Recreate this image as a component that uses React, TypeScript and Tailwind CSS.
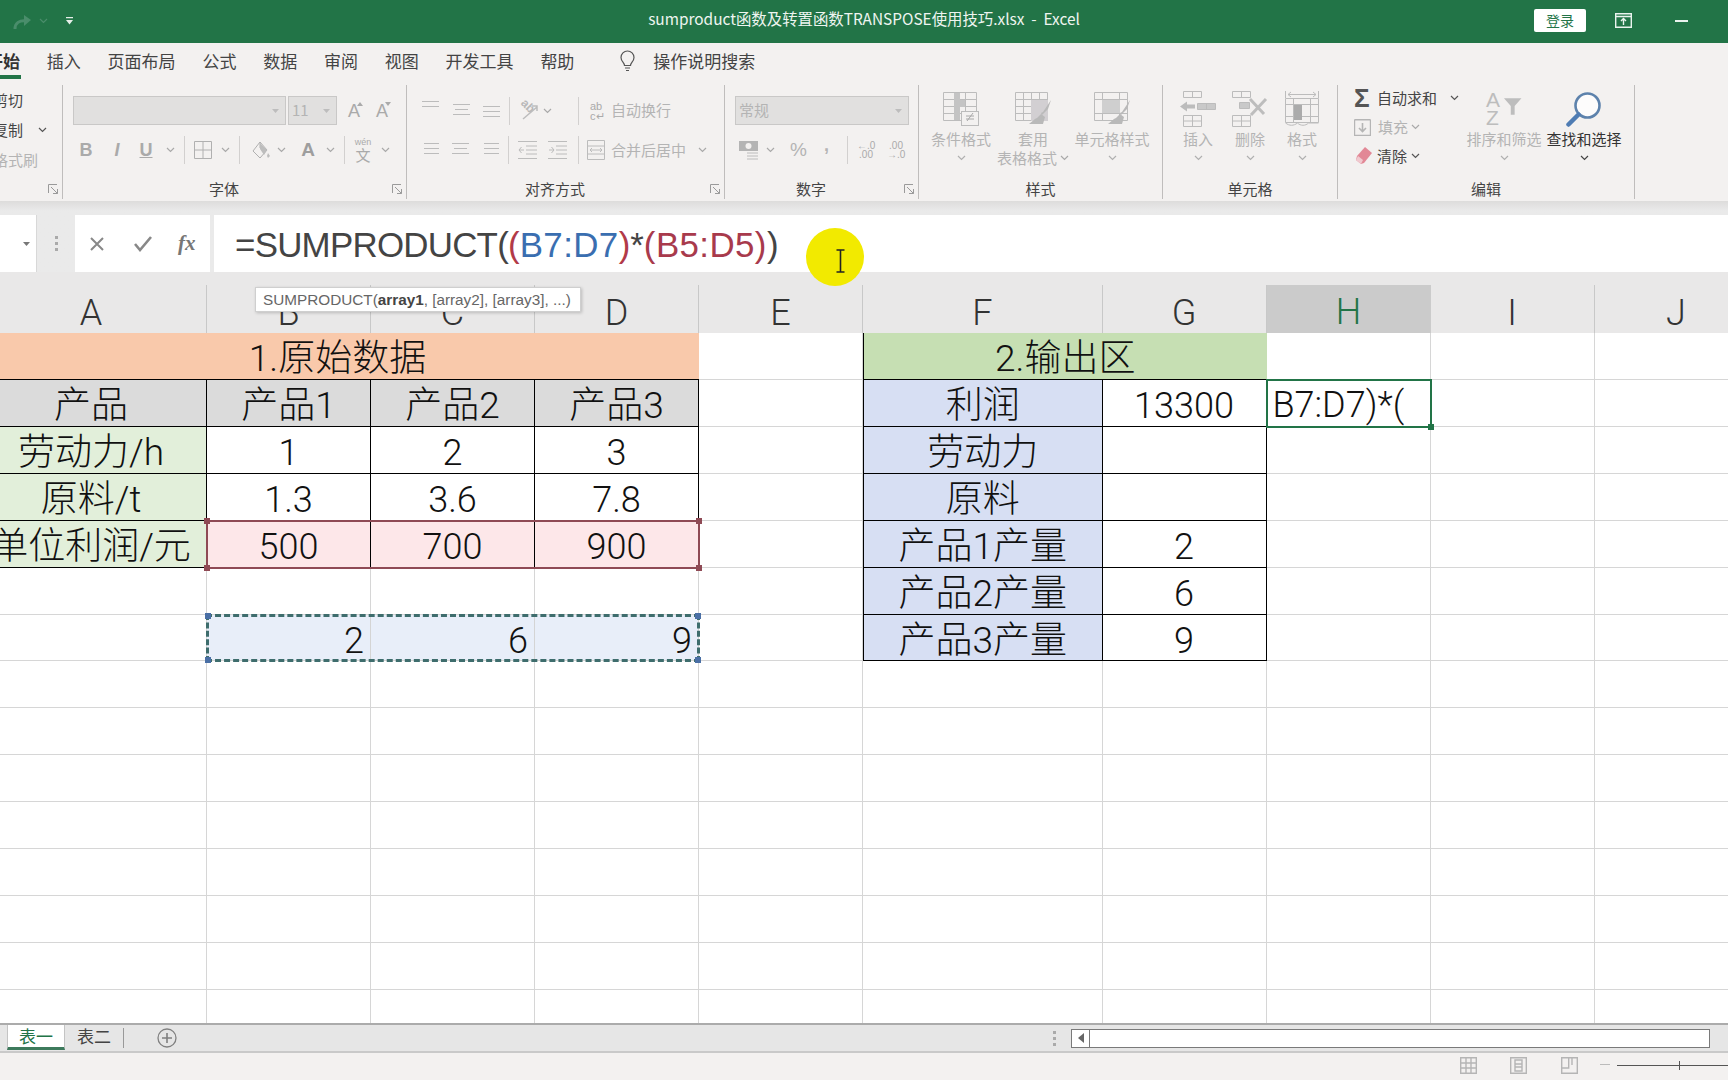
import React from "react";

const G = "#bcbcbc";

function Chev({ c = "#a9a9a9", className = "" }: { c?: string; className?: string }) {
  return (
    <svg viewBox="0 0 9 6" className={"w-[9px] h-[6px] shrink-0 " + className} fill="none" stroke={c} strokeWidth="1.2">
      <path d="M1 1l3.5 3.5L8 1" />
    </svg>
  );
}
function Sep({ className = "" }: { className?: string }) {
  return <div className={"w-px h-[28px] bg-[#d2d0cf] shrink-0 " + className} />;
}
function Launcher() {
  return (
    <svg viewBox="0 0 11 11" className="w-[11px] h-[11px]" fill="none" stroke="#9a9a9a" strokeWidth="1">
      <path d="M.5 9V.5H9M3 3l6.5 6.5M5 9.5h4.5V5" />
    </svg>
  );
}
function Lines({ w = [19, 14, 19], y = 0 }: { w?: number[]; y?: number }) {
  return (
    <svg viewBox="0 0 19 16" className="w-[19px] h-[16px] shrink-0" stroke={G} strokeWidth="1">
      {w.map((x, i) => (
        <path key={i} d={`M${(19 - x) / 2} ${y + 1.5 + i * 5}h${x}`} />
      ))}
    </svg>
  );
}
function Combo({ className, text }: { className: string; text: string }) {
  return (
    <div className={"h-[29px] bg-[#e1e0df] border border-[#c9c8c7] flex items-center justify-between pl-[3px] pr-[6px] text-[15px] text-[#b4b4b4] shrink-0 " + className}>
      <span>{text}</span>
      <svg viewBox="0 0 7 4" className="w-[7px] h-[4px]" fill="#bdbdbd"><path d="M0 0h7L3.5 4z" /></svg>
    </div>
  );
}
function GrowA({ down }: { down?: boolean }) {
  return (
    <div className="flex items-start w-[17px] shrink-0">
      <span className="text-[18px] leading-[24px] text-[#aaa] [font-family:'Liberation_Sans',sans-serif]">A</span>
      <svg viewBox="0 0 6 4" className="w-[6px] h-[4px] mt-[3px] -ml-[3px]" fill="#aaa"><path d={down ? "M0 0h6L3 4z" : "M0 4h6L3 0z"} /></svg>
    </div>
  );
}
function BigBtn({ className, icon, a, b, dark }: { className: string; icon: React.ReactNode; a: string; b?: string; dark?: boolean }) {
  return (
    <div className={"flex flex-col items-center pt-[5px] shrink-0 " + className}>
      <div className="h-[38px] flex items-center justify-center">{icon}</div>
      <div className={"h-[20px] mt-[1px] text-[15px] leading-[20px] whitespace-nowrap " + (dark ? "text-[#333]" : "text-[#b4b4b4]")}>{a}</div>
      {b ? (
        <div className="h-[18px] text-[15px] leading-[18px] whitespace-nowrap text-[#b4b4b4] flex items-center gap-[3px]">{b}<Chev /></div>
      ) : (
        <div className="h-[18px] flex items-center"><Chev c={dark ? "#444" : "#b0b0b0"} /></div>
      )}
    </div>
  );
}
function Section({ className, label, launcher, children }: { className: string; label: string; launcher?: boolean; children: React.ReactNode }) {
  return (
    <div className={"flex flex-col h-full border-r border-[#bfbdbc] shrink-0 " + className}>
      <div className="flex-1 min-h-0">{children}</div>
      <div className="h-[20px] grid grid-cols-[1fr_auto_1fr] items-center text-[15px] leading-[20px] text-[#444]">
        <span />
        <span className={launcher ? "pr-[21px]" : ""}>{label}</span>
        <span className="flex justify-end pr-[3px]">{launcher ? <Launcher /> : null}</span>
      </div>
    </div>
  );
}

const IconCond = (
  <svg viewBox="0 0 36 34" className="w-[36px] h-[34px]" fill="none" stroke={G} strokeWidth="1">
    <path d="M.5.5h33v28H.5zM11.5.5v28M22.5.5v28M.5 7.5h33M.5 14.5h33M.5 21.5h33" />
    <path fill="#c4c4c4" stroke="none" d="M11 1h6v27h-6zM17 8h5v7h-5z" />
    <rect x="18.5" y="19.5" width="17" height="14" fill="#f3f1f0" />
    <path d="M24 29l6-8M23 24h8M23 27h8" stroke="#a8a8a8" />
  </svg>
);
const Brush = <path fill="#b9b9b9" stroke="none" d="M36 8l-8 12-2 1 1 2 6-6zM26 22l-4 4c-3 1-5 4-8 6h14l2-7z" />;
const IconTable = (
  <svg viewBox="0 0 36 34" className="w-[36px] h-[34px]" fill="none" stroke={G} strokeWidth="1">
    <path d="M.5.5h32v28H.5zM8.5.5v28M16.5.5v28M24.5.5v28M.5 7.5h32M.5 14.5h32M.5 21.5h32" />
    <path fill="#d2cfd2" stroke="none" d="M16 8h17v21H16z" />
    {Brush}
  </svg>
);
const IconCell = (
  <svg viewBox="0 0 36 34" className="w-[36px] h-[34px]" fill="none" stroke={G} strokeWidth="1">
    <path d="M.5.5h33v28H.5zM8.5.5v28M25.5.5v28M.5 7.5h33M.5 21.5h33" />
    <path fill="#cfcfcf" stroke="none" d="M8 8h18v13H8z" />
    {Brush}
  </svg>
);
const IconInsert = (
  <svg viewBox="0 0 36 36" className="w-[36px] h-[36px]" fill="none" stroke={G} strokeWidth="1">
    <path d="M3.5.5h18v6h-18zM12.5.5v6M3.5 24.5h18v11h-18zM12.5 24.5v11M3.5 30h18" />
    <path fill="#c9c9c9" d="M17.5 12.5h18v6h-18z" />
    <path d="M26.5 12.5v6" />
    <path fill={G} stroke="none" d="M0 15.5l7-5v3h8v4H7v3z" />
  </svg>
);
const IconDelete = (
  <svg viewBox="0 0 36 36" className="w-[36px] h-[36px]" fill="none" stroke={G} strokeWidth="1">
    <path d="M.5.5h18v6H.5zM9.5.5v6M.5 24.5h18v11H.5zM9.5 24.5v11M.5 30h18" />
    <path fill="#c9c9c9" d="M7.5 11.5h10v6h-10z" />
    <path stroke="#bdbdbd" strokeWidth="3" d="M18 8l14 15M34 8L19 24" />
  </svg>
);
const IconFormat = (
  <svg viewBox="0 0 34 36" className="w-[34px] h-[36px]" fill="none" stroke={G} strokeWidth="1">
    <path d="M.5 0v7M33.5 0v7M3 3.5h28M3 3.5l3-2.5M3 3.5l3 2.5M31 3.5l-3-2.5M31 3.5l-3 2.5" />
    <path d="M.5 7.5h33v24H.5zM8.5 7.5v24M25.5 7.5v24M.5 13.5h33M.5 25.5h33" />
    <path fill="#ababab" stroke="none" d="M9 14h8v15H9z" />
    <path d="M.5 32c4 3 8 3 12 0 3 3 8 3 11 0h10" />
  </svg>
);
const IconSortF = (
  <div className="flex items-start gap-0 w-[36px] h-[36px]">
    <div className="flex flex-col w-[15px] text-[21px] leading-[18px] font-normal text-[#bdbdbd] [font-family:'Liberation_Sans',sans-serif]"><span>A</span><span>Z</span></div>
    <svg viewBox="0 0 20 20" className="w-[20px] h-[20px] mt-[6px] ml-[2px]" fill="#bdbdbd"><path d="M1 1h18l-7 8v9H8V9z" /></svg>
  </div>
);
const IconFind = (
  <svg viewBox="0 0 36 36" className="w-[36px] h-[36px]" fill="none">
    <circle cx="21.5" cy="14.5" r="12" fill="#fdfcfc" stroke="#5d82ac" strokeWidth="2.6" />
    <path d="M12.5 23.5L2.5 33.5" stroke="#4f7cb3" strokeWidth="4.5" strokeLinecap="round" />
  </svg>
);

function TitleBar() {
  return (
    <div className="h-[43px] bg-[#227447] grid grid-cols-[1fr_auto_1fr] items-center shrink-0">
      <div className="flex items-center pl-[12px]">
        <svg viewBox="0 0 20 16" className="w-[20px] h-[16px]" fill="none" stroke="#4a8d6b" strokeWidth="3">
          <path d="M3 15c0-6 4-9 12-8" /><path fill="#4a8d6b" stroke="none" d="M12 1l7 5-7 6z" />
        </svg>
        <Chev c="#4a8d6b" className="ml-[7px] mb-[2px]" />
        <svg viewBox="0 0 7 9" className="w-[7px] h-[9px] ml-[18px]" fill="#e6efe9"><path d="M0 0h7v1.2H0zM0 3h7L3.5 7.5z" /></svg>
      </div>
      <div className="text-[15.4px] text-[#eef5f0] whitespace-pre -mt-[6px]">sumproduct函数及转置函数TRANSPOSE使用技巧.xlsx  -  Excel</div>
      <div className="flex items-center justify-end -mt-[2px]">
        <div className="w-[52px] h-[23px] bg-white rounded-[2px] text-[#227447] text-[14px] leading-[23px] text-center">登录</div>
        <svg viewBox="0 0 17 15" className="w-[17px] h-[15px] ml-[29px]" fill="none" stroke="#eaf3ee" strokeWidth="1.4">
          <path d="M.7.7h15.6v13.6H.7zM.7 3.5h15.6" /><path d="M8.5 12V6M6 8l2.5-2.5L11 8" />
        </svg>
        <div className="w-[13px] h-[2px] bg-[#eaf3ee] ml-[43px] mr-[40px]" />
      </div>
    </div>
  );
}

function Tabs() {
  const t = ["插入", "页面布局", "公式", "数据", "审阅", "视图", "开发工具", "帮助"];
  return (
    <div className="h-[37px] bg-[#f3f1f0] flex items-start pt-[7px] gap-[26.8px] text-[17px] leading-[22px] text-[#444] shrink-0">
      <div className="-ml-[14px] w-[34px] flex flex-col">
        <span className="font-bold text-[#333] whitespace-nowrap">开始</span>
        <div className="ml-[14px] w-[21px] h-[4px] mt-[3px] bg-[#227447]" />
      </div>
      {t.map((x) => (
        <span key={x} className="whitespace-nowrap">{x}</span>
      ))}
      <div className="flex items-center gap-[17px] ml-[18px]">
        <svg viewBox="0 0 17 22" className="w-[17px] h-[22px]" fill="none" stroke="#555" strokeWidth="1.2">
          <path d="M5.5 15.5c0-3-3.5-4-3.5-8a6.5 6.5 0 0113 0c0 4-3.5 5-3.5 8zM6 18h5M7 20.5h3" />
        </svg>
        <span className="whitespace-nowrap">操作说明搜索</span>
      </div>
    </div>
  );
}

function Ribbon() {
  return (
    <div className="h-[121px] bg-[#f3f1f0] flex pt-[5px] pb-[2px] shrink-0">
      <Section className="w-[63px]" label="" launcher>
        <div className="text-[15px] leading-[30px] text-[#444] -ml-[7px] whitespace-nowrap">
          <div>剪切</div>
          <div className="flex items-center gap-[15px]">复制<Chev c="#555" /></div>
          <div className="text-[#b4b4b4]">格式刷</div>
        </div>
      </Section>

      <Section className="w-[344px]" label="字体" launcher>
        <div className="flex items-center pt-[11px] pl-[10px] h-[40px]">
          <Combo className="w-[213px]" text="" />
          <Combo className="w-[49px] ml-[2px]" text="11" />
          <div className="ml-[11px]"><GrowA /></div>
          <div className="ml-[11px]"><GrowA down /></div>
        </div>
        <div className="flex items-center h-[30px] mt-[10px] text-[#aaa] [font-family:'Liberation_Sans',sans-serif]">
          <span className="w-[18px] ml-[14px] text-center text-[18px] font-bold">B</span>
          <span className="w-[18px] ml-[13px] text-center text-[18px] italic font-bold">I</span>
          <span className="w-[18px] ml-[11px] text-center text-[18px] font-bold underline">U</span>
          <Chev className="ml-[11px]" />
          <Sep className="ml-[9px]" />
          <svg viewBox="0 0 18 18" className="w-[18px] h-[18px] ml-[9px]" fill="none" stroke="#b0b0b0"><path d="M.5.5h17v17H.5zM9 .5v17M.5 9h17" /></svg>
          <Chev className="ml-[9px]" />
          <Sep className="ml-[9px]" />
          <svg viewBox="0 0 18 20" className="w-[18px] h-[20px] ml-[12px]" fill="none" stroke="#b0b0b0"><path d="M8 2L1 11l7 7 7-8zM8 2v6" /><path fill="#bdbdbd" stroke="none" d="M8 3l7 7-3 5-4-6zM16 13l2 3-2 2-1-2z" /></svg>
          <Chev className="ml-[7px]" />
          <span className="w-[16px] ml-[14px] text-center text-[19px] font-bold text-[#9e9e9e]">A</span>
          <Chev className="ml-[10px]" />
          <Sep className="ml-[9px]" />
          <div className="w-[18px] ml-[9px] flex flex-col items-center text-[#aaa] leading-none">
            <span className="text-[9px] leading-[9px] whitespace-nowrap">wén</span>
            <span className="text-[15px] leading-[15px] [font-family:'Noto_Sans_CJK_SC',sans-serif]">文</span>
          </div>
          <Chev className="ml-[9px]" />
        </div>
      </Section>

      <Section className="w-[318px]" label="对齐方式" launcher>
        <div className="flex items-center pt-[11px] h-[40px]">
          <div className="ml-[14px] -mt-[6px]"><Lines w={[17, 17]} /></div>
          <div className="ml-[12px]"><Lines w={[17, 13, 17]} /></div>
          <div className="ml-[11px] mt-[4px]"><Lines w={[17, 17, 17]} /></div>
          <Sep className="ml-[8px]" />
          <div className="ml-[10px] w-[18px] h-[18px] relative shrink-0">
            <span className="absolute left-[1px] -top-[3px] text-[12px] leading-[14px] font-bold text-[#b8b8b8] rotate-45 [font-family:'Liberation_Sans',sans-serif]">ab</span>
            <svg viewBox="0 0 18 18" className="absolute inset-0 w-[18px] h-[18px]" fill="none" stroke={G} strokeWidth="1.5"><path d="M3 17L17 5M12 4h5v5" /></svg>
          </div>
          <Chev className="ml-[5px]" />
          <Sep className="ml-[26px]" />
          <div className="ml-[11px] w-[13px] flex flex-col text-[11px] leading-[10px] text-[#aaa] [font-family:'Liberation_Sans',sans-serif]"><span>ab</span><span>c↵</span></div>
          <span className="ml-[8px] text-[15px] text-[#b4b4b4] whitespace-nowrap">自动换行</span>
        </div>
        <div className="flex items-center h-[30px] mt-[10px]">
          <div className="ml-[15px]"><Lines w={[15, 15, 15]} /></div>
          <div className="ml-[10px]"><Lines w={[17, 13, 17]} /></div>
          <div className="ml-[12px]"><Lines w={[15, 15, 15]} /></div>
          <Sep className="ml-[7px]" />
          <svg viewBox="0 0 19 18" className="w-[19px] h-[18px] ml-[9px]" fill="none" stroke={G}><path d="M0 .5h19M8 5h11M8 9h11M8 13h11M0 17.5h19M6 9H1M3.5 6L1 9l2.5 3" /></svg>
          <svg viewBox="0 0 19 18" className="w-[19px] h-[18px] ml-[11px]" fill="none" stroke={G}><path d="M0 .5h19M8 5h11M8 9h11M8 13h11M0 17.5h19M1 9h5M3.5 6L6 9l-2.5 3" /></svg>
          <Sep className="ml-[11px]" />
          <svg viewBox="0 0 18 20" className="w-[18px] h-[20px] ml-[8px]" fill="none" stroke={G}><path d="M.5.5h17v19H.5zM.5 6h17M.5 14h17M3 10h12M3 10l2-2M3 10l2 2M15 10l-2-2M15 10l-2 2" /></svg>
          <span className="ml-[6px] text-[15px] text-[#b4b4b4] whitespace-nowrap">合并后居中</span>
          <Chev className="ml-[12px]" />
        </div>
      </Section>

      <Section className="w-[194px]" label="数字" launcher>
        <div className="flex items-center pt-[11px] pl-[10px] h-[40px]">
          <Combo className="w-[174px]" text="常规" />
        </div>
        <div className="flex items-center h-[30px] mt-[10px]">
          <svg viewBox="0 0 19 20" className="w-[19px] h-[20px] ml-[14px]" fill="none"><path fill="#b4b4b4" d="M0 1h19v10H0z" /><circle cx="9.5" cy="6" r="3" fill="#f3f1f0" /><path stroke={G} d="M8 13h11M8 16h11M8 19h11" /></svg>
          <Chev className="ml-[8px]" />
          <span className="ml-[15px] w-[18px] text-[19px] text-[#b4b4b4] [font-family:'Liberation_Sans',sans-serif]">%</span>
          <span className="ml-[16px] w-[6px] -mt-[10px] text-[18px] font-bold text-[#b4b4b4] [font-family:'Liberation_Sans',sans-serif]">,</span>
          <Sep className="ml-[17px]" />
          <div className="ml-[9px] w-[16px] text-[10px] leading-[9px] text-right text-[#aaa] [font-family:'Liberation_Sans',sans-serif]"><div>←.0</div><div>.00</div></div>
          <div className="ml-[14px] w-[16px] text-[10px] leading-[9px] text-right text-[#aaa] [font-family:'Liberation_Sans',sans-serif]"><div>.00</div><div>→.0</div></div>
        </div>
      </Section>

      <Section className="w-[244px]" label="样式">
        <div className="flex">
          <BigBtn className="w-[84px]" icon={IconCond} a="条件格式" />
          <BigBtn className="w-[60px]" icon={IconTable} a="套用" b="表格格式" />
          <BigBtn className="w-[98px]" icon={IconCell} a="单元格样式" />
        </div>
      </Section>

      <Section className="w-[175px]" label="单元格">
        <div className="flex">
          <BigBtn className="w-[70px]" icon={IconInsert} a="插入" />
          <BigBtn className="w-[34px]" icon={IconDelete} a="删除" />
          <BigBtn className="w-[70px]" icon={IconFormat} a="格式" />
        </div>
      </Section>

      <Section className="w-[297px]" label="编辑">
        <div className="flex">
          <div className="w-[130px] pl-[16px] -mt-[2px] text-[15px] leading-[20px]">
            <div className="h-[30px] flex items-center text-[#444]">
              <span className="w-[16px] text-[26px] leading-[20px] font-bold text-[#555] [font-family:'Liberation_Sans',sans-serif]">Σ</span>
              <span className="ml-[7px]">自动求和</span>
              <Chev c="#555" className="ml-[13px]" />
            </div>
            <div className="h-[28px] flex items-center text-[#b4b4b4]">
              <svg viewBox="0 0 17 18" className="w-[17px] h-[18px] shrink-0" fill="none" stroke="#b5b5b5" strokeWidth="1.2"><path d="M.6 2h15.8v15.4H.6zM.6 1.5h15.8" /><path d="M8.5 5v8M5 10l3.5 3.5L12 10" strokeWidth="1.6" /></svg>
              <span className="ml-[7px]">填充</span>
              <Chev className="ml-[3px]" />
            </div>
            <div className="h-[30px] flex items-center text-[#444]">
              <svg viewBox="0 0 18 18" className="w-[18px] h-[18px] shrink-0"><path fill="#e28896" d="M11 0l7 6-8 10-3 1-5-4 1-4z" /><path fill="#f0c9cf" d="M4 9l5 4-2 4-5-4z" /></svg>
              <span className="ml-[5px]">清除</span>
              <Chev c="#555" className="ml-[4px]" />
            </div>
          </div>
          <BigBtn className="w-[72px]" icon={IconSortF} a="排序和筛选" />
          <BigBtn className="w-[88px]" icon={IconFind} a="查找和选择" dark />
        </div>
      </Section>
    </div>
  );
}

function FormulaBar() {
  return (
    <div className="h-[71px] flex items-stretch shrink-0 bg-gradient-to-b from-[#dddcdb] from-0% to-[#eaeaea] to-[14%]">
      <div className="flex items-stretch w-full pt-[14px]">
        <div className="w-[37px] bg-white border-r border-[#d8d8d8] flex items-center justify-end pr-[6px]">
          <svg viewBox="0 0 7 4" className="w-[7px] h-[4px]" fill="#777"><path d="M0 0h7L3.5 4z" /></svg>
        </div>
        <div className="w-[38px] flex items-center justify-center">
          <div className="flex flex-col gap-[3px]">
            <div className="w-[3px] h-[3px] bg-[#aaa]" /><div className="w-[3px] h-[3px] bg-[#aaa]" /><div className="w-[3px] h-[3px] bg-[#aaa]" />
          </div>
        </div>
        <div className="w-[135px] bg-white flex items-center pl-[14px] shrink-0">
          <svg viewBox="0 0 16 16" className="w-[16px] h-[16px]" fill="none" stroke="#888" strokeWidth="2"><path d="M2 2l12 12M14 2L2 14" /></svg>
          <svg viewBox="0 0 18 16" className="w-[18px] h-[16px] ml-[29px]" fill="none" stroke="#888" strokeWidth="2.6"><path d="M1 8l5 6L17 1" /></svg>
          <span className="ml-[26px] text-[21px] italic font-bold text-[#777] [font-family:'Liberation_Serif',serif]">fx</span>
        </div>
        <div className="w-[4px] shrink-0" />
        <div className="flex-1 bg-white flex items-center pl-[21px] pt-[3px] text-[34.9px] leading-none text-[#444] [font-family:'Liberation_Sans',sans-serif] whitespace-pre">
          <span className="tracking-[-0.75px]">=SUMPRODUCT(</span>
          <span className="text-[#b23a48]">(</span>
          <span className="text-[#3a6eb0] tracking-[0.4px]">B7:D7</span>
          <span className="text-[#b23a48]">)</span>
          <span>*</span>
          <span className="text-[#a83a4c] tracking-[0.4px]">(B5:D5)</span>
          <span>)</span>
        </div>
      </div>
    </div>
  );
}

const COLS = "grid-cols-[231px_164px_164px_164px_164px_239.5px_164px_164px_164px_164px]";

function Headers() {
  const l = ["A", "B", "C", "D", "E", "F", "G", "H", "I", "J"];
  return (
    <div className="h-[48px] bg-[#e9e8e8] shrink-0">
      <div className={"grid -ml-[24px] h-[48px] " + COLS}>
        {l.map((x) =>
          x === "H" ? (
            <div key={x} className="bg-[#cbcbcb] text-[#227447] border-b-[3px] border-[#227447] flex items-center justify-center text-[36px] font-light">H</div>
          ) : (
            <div key={x} className="border-r border-b-2 border-r-[#c8c8c8] border-b-[#aaaaaa] flex items-center justify-center text-[36px] font-light text-[#333]">{x}</div>
          )
        )}
      </div>
    </div>
  );
}

const B = "border-r border-b border-black";
const C37 = "text-[37px]";
const CJK = "bg-[#e2efda]";
const BL = "bg-[#d7dff3]";
const CELLS: { pos: string; t: string; cls: string }[] = [
  { pos: "col-start-1 col-span-4 row-start-1", t: "1.原始数据", cls: "justify-center bg-[#f9c9ab] border-b border-black " + C37 },
  { pos: "col-start-6 col-span-2 row-start-1", t: "2.输出区", cls: "justify-center bg-[#c6dfb3] border-l border-b border-black " + C37 },
  { pos: "col-start-1 row-start-2", t: "产品", cls: "justify-center bg-[#dbdbdb] " + B + " " + C37 },
  { pos: "col-start-2 row-start-2", t: "产品1", cls: "justify-center bg-[#dbdbdb] " + B + " " + C37 },
  { pos: "col-start-3 row-start-2", t: "产品2", cls: "justify-center bg-[#dbdbdb] " + B + " " + C37 },
  { pos: "col-start-4 row-start-2", t: "产品3", cls: "justify-center bg-[#dbdbdb] " + B + " " + C37 },
  { pos: "col-start-1 row-start-3", t: "劳动力/h", cls: "justify-center " + CJK + " " + B + " " + C37 },
  { pos: "col-start-2 row-start-3", t: "1", cls: "justify-center " + B },
  { pos: "col-start-3 row-start-3", t: "2", cls: "justify-center " + B },
  { pos: "col-start-4 row-start-3", t: "3", cls: "justify-center " + B },
  { pos: "col-start-1 row-start-4", t: "原料/t", cls: "justify-center " + CJK + " " + B + " " + C37 },
  { pos: "col-start-2 row-start-4", t: "1.3", cls: "justify-center " + B },
  { pos: "col-start-3 row-start-4", t: "3.6", cls: "justify-center " + B },
  { pos: "col-start-4 row-start-4", t: "7.8", cls: "justify-center " + B },
  { pos: "col-start-1 row-start-5", t: "单位利润/元", cls: "justify-center " + CJK + " " + B + " whitespace-nowrap overflow-hidden " + C37 },
  { pos: "col-start-2 row-start-5", t: "500", cls: "justify-center bg-[#fde7e9] " + B },
  { pos: "col-start-3 row-start-5", t: "700", cls: "justify-center bg-[#fde7e9] " + B },
  { pos: "col-start-4 row-start-5", t: "900", cls: "justify-center bg-[#fde7e9] " + B },
  { pos: "col-start-2 row-start-7", t: "2", cls: "bg-[#e8eef9] justify-end pr-[6px] border-r border-b border-[#d4d4d4]" },
  { pos: "col-start-3 row-start-7", t: "6", cls: "bg-[#e8eef9] justify-end pr-[6px] border-r border-b border-[#d4d4d4]" },
  { pos: "col-start-4 row-start-7", t: "9", cls: "bg-[#e8eef9] justify-end pr-[6px] border-r border-b border-[#d4d4d4]" },
  { pos: "col-start-6 row-start-2", t: "利润", cls: "justify-center " + BL + " border-l " + B + " " + C37 },
  { pos: "col-start-6 row-start-3", t: "劳动力", cls: "justify-center " + BL + " border-l " + B + " " + C37 },
  { pos: "col-start-6 row-start-4", t: "原料", cls: "justify-center " + BL + " border-l " + B + " " + C37 },
  { pos: "col-start-6 row-start-5", t: "产品1产量", cls: "justify-center " + BL + " border-l " + B + " " + C37 },
  { pos: "col-start-6 row-start-6", t: "产品2产量", cls: "justify-center " + BL + " border-l " + B + " " + C37 },
  { pos: "col-start-6 row-start-7", t: "产品3产量", cls: "justify-center " + BL + " border-l " + B + " " + C37 },
  { pos: "col-start-7 row-start-2", t: "13300", cls: "justify-center " + B },
  { pos: "col-start-7 row-start-3", t: "", cls: "justify-center " + B },
  { pos: "col-start-7 row-start-4", t: "", cls: "justify-center " + B },
  { pos: "col-start-7 row-start-5", t: "2", cls: "justify-center " + B },
  { pos: "col-start-7 row-start-6", t: "6", cls: "justify-center " + B },
  { pos: "col-start-7 row-start-7", t: "9", cls: "justify-center " + B },
];

function Handle({ className }: { className: string }) {
  return <div className={"absolute w-[6px] h-[6px] " + className} />;
}

function Sheet() {
  const empties = Array.from({ length: 130 });
  return (
    <div className="flex-1 min-h-0 overflow-hidden bg-white">
      <div className={"grid -ml-[24px] auto-rows-[46.93px] text-[36px] font-light text-[#111] [font-family:Roboto,'Noto_Sans_CJK_SC',sans-serif] " + COLS}>
        {CELLS.map((c) => (
          <div key={c.pos} className={"flex items-center pt-[6px] " + c.pos + " " + c.cls}>
            {c.t}
          </div>
        ))}
        <div className="col-start-2 col-span-3 row-start-5 -m-px border-2 border-[#8f4a55] relative pointer-events-none z-10">
          <Handle className="-left-[4px] -top-[4px] bg-[#8f4a55]" />
          <Handle className="-right-[4px] -top-[4px] bg-[#8f4a55]" />
          <Handle className="-left-[4px] -bottom-[4px] bg-[#8f4a55]" />
          <Handle className="-right-[4px] -bottom-[4px] bg-[#8f4a55]" />
        </div>
        <div className="col-start-2 col-span-3 row-start-7 -m-px border-[3px] border-dashed border-[#3e6d6d] relative pointer-events-none z-10">
          <Handle className="-left-[4px] -top-[4px] bg-[#4a6fa5]" />
          <Handle className="-right-[4px] -top-[4px] bg-[#4a6fa5]" />
          <Handle className="-left-[4px] -bottom-[4px] bg-[#4a6fa5]" />
          <Handle className="-right-[4px] -bottom-[4px] bg-[#4a6fa5]" />
        </div>
        <div className="col-start-8 row-start-2 -m-px border-2 border-[#227447] relative bg-white flex items-center pl-[5px] pt-[4px] z-10 whitespace-nowrap">
          <span className="w-full overflow-hidden">B7:D7)*(</span>
          <Handle className="-right-[4px] -bottom-[4px] bg-[#227447]" />
        </div>
        {empties.map((_, i) => (
          <div key={i} className="border-r border-b border-[#d6d6d6]" />
        ))}
      </div>
    </div>
  );
}

function SheetBar() {
  return (
    <div className="h-[30px] bg-[#e6e6e6] border-t-2 border-b-2 border-t-[#ababab] border-b-[#c9c9c9] flex items-center shrink-0 text-[17px]">
      <div className="ml-[7px] w-[58px] h-[25px] self-start bg-white border-b-[3px] border-x border-x-[#c4c4c4] border-b-[#3d7a5c] text-[#227447] text-center leading-[21px]">表一</div>
      <div className="ml-[12px] text-[#444] -mt-[4px]">表二</div>
      <div className="ml-[12px] w-px h-[20px] bg-[#999]" />
      <svg viewBox="0 0 20 20" className="w-[20px] h-[20px] ml-[33px]" fill="none" stroke="#808080" strokeWidth="1.3">
        <circle cx="10" cy="10" r="9" /><path d="M10 5v10M5 10h10" strokeWidth="1.6" />
      </svg>
      <div className="flex-1" />
      <div className="flex flex-col gap-[3px] mr-[15px]">
        <div className="w-[3px] h-[3px] bg-[#aaa]" /><div className="w-[3px] h-[3px] bg-[#aaa]" /><div className="w-[3px] h-[3px] bg-[#aaa]" />
      </div>
      <div className="w-[639px] h-[19px] bg-white border border-[#7a7a7a] flex items-center mr-[18px]">
        <div className="w-[18px] h-full border-r border-[#7a7a7a] flex items-center justify-center">
          <svg viewBox="0 0 6 10" className="w-[6px] h-[10px]" fill="#666"><path d="M6 0v10L0 5z" /></svg>
        </div>
      </div>
    </div>
  );
}

function StatusBar() {
  return (
    <div className="h-[27px] shrink-0 bg-[#f3f1f0] flex items-center justify-end overflow-hidden pb-[2px]">
      <svg viewBox="0 0 17 17" className="w-[17px] h-[17px]" fill="none" stroke="#b5b5b5" strokeWidth="1.4"><path d="M.7.7h15.6v15.6H.7zM6 .7v15.6M11 .7v15.6M.7 6h15.6M.7 11h15.6" /></svg>
      <svg viewBox="0 0 17 17" className="w-[17px] h-[17px] ml-[33px]" fill="none" stroke="#b5b5b5" strokeWidth="1.4"><path d="M.7.7h15.6v15.6H.7zM5 3h7v11H5zM5 7h7M5 10h7" /></svg>
      <svg viewBox="0 0 17 17" className="w-[17px] h-[17px] ml-[34px]" fill="none" stroke="#b5b5b5" strokeWidth="1.4"><path d="M.7.7h15.6v15.6H.7zM.7 11h7V.7M11 .7V8" /></svg>
      <div className="w-[10px] h-px bg-[#bbb] ml-[22px] -mt-[3px]" />
      <div className="w-[111px] h-px bg-[#555] ml-[7px] flex items-center justify-start pl-[62px]">
        <div className="w-px h-[9px] bg-[#555]" />
      </div>
    </div>
  );
}

export default function App() {
  return (
    <div className="relative w-[1728px] h-[1080px] overflow-hidden flex flex-col bg-white [font-family:'Noto_Sans_CJK_SC','Open_Sans',sans-serif]">
      <TitleBar />
      <Tabs />
      <Ribbon />
      <FormulaBar />
      <div className="h-[13px] bg-[#e9e8e8] shrink-0" />
      <div className="[font-family:Roboto,'Noto_Sans_CJK_SC',sans-serif]"><Headers /></div>
      <Sheet />
      <SheetBar />
      <StatusBar />

      <div className="absolute left-[255px] top-[287px] w-[326px] h-[25px] bg-white border border-[#cfcfcf] shadow-[1px_1px_3px_rgba(0,0,0,0.2)] text-[15.3px] leading-[23px] text-[#666] pl-[7px] whitespace-pre [font-family:'Liberation_Sans',sans-serif] z-20">
        SUMPRODUCT(<b className="text-[#444]">array1</b>, [array2], [array3], ...)
      </div>
      <div className="absolute left-[806px] top-[228px] w-[58px] h-[58px] rounded-full bg-[#f2ea00] z-20" />
      <svg viewBox="0 0 9 24" className="absolute left-[836px] top-[249px] w-[9px] h-[24px] z-30" fill="none" stroke="#222" strokeWidth="1.6">
        <path d="M.5 1h8M.5 23h8M4.5 1v22" />
      </svg>
    </div>
  );
}
